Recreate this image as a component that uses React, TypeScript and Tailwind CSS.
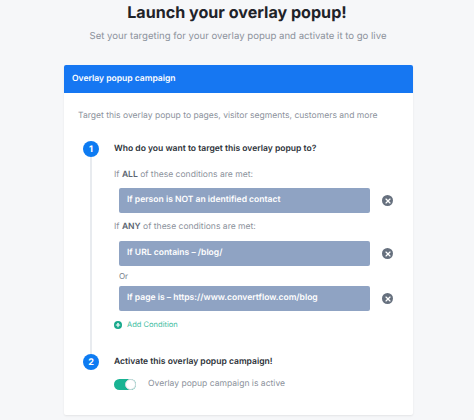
import { Plus, X } from "lucide-react";

const anyConditions = ["If URL contains – /blog/", "If page is – https://www.convertflow.com/blog"];

function StepBadge({ n }: { n: number }) {
  return (
    <span className="flex h-4 w-4 shrink-0 items-center justify-center rounded-full bg-[#0d7bf2] text-[9px] font-bold leading-none text-white">
      {n}
    </span>
  );
}

function ConditionRow({ label }: { label: string }) {
  return (
    <div className="flex items-center">
      <div className="flex h-[25px] w-[251px] items-center rounded-[2px] bg-[#8fa3c3] pl-2 text-[8.55px] font-semibold text-white">
        {label}
      </div>
      <span className="ml-[12px] flex h-[11px] w-[11px] items-center justify-center rounded-full bg-[#66707e]">
        <X size={8} strokeWidth={3.5} className="text-white" />
      </span>
    </div>
  );
}

export default function App() {
  return (
    <div className="h-[420px] w-[474px] overflow-hidden bg-[#f6f7f9] font-['Inter',sans-serif] [text-rendering:geometricPrecision]">
      <div className="flex flex-col items-center">
        <h1 className="text-[16.1px] font-bold leading-[25px] text-[#1f2329]">Launch your overlay popup!</h1>
        <p className="ml-[2px] mt-[6px] text-[9.6px] leading-[12px] text-[#8c929c]">
          Set your targeting for your overlay popup and activate it to go live
        </p>
      </div>

      <section className="ml-[64px] mt-[22px] h-[350px] w-[349px] rounded-[2px] bg-white shadow-[0_1px_2px_rgba(0,0,0,0.08)]">
        <div className="flex h-[28px] items-center rounded-t-[2px] bg-[#1677f2] pl-2 text-[8.55px] font-semibold text-white">
          Overlay popup campaign
        </div>

        <div className="pl-[14px] pt-[17px]">
          <p className="text-[8.55px] leading-[12px] text-[#8c929c]">
            Target this overlay popup to pages, visitor segments, customers and more
          </p>

          <div className="mt-[19px] flex">
            <div className="flex w-[36px] flex-col items-start pl-[5px]">
              <div className="flex h-full w-4 flex-col items-center">
                <StepBadge n={1} />
                <div className="w-[2px] flex-1 bg-[#e8ebef]" />
              </div>
            </div>
            <div className="pb-[25px]">
              <h2 className="text-[8.55px] font-semibold leading-[16px] text-[#2c3138]">
                Who do you want to target this overlay popup to?
              </h2>
              <p className="mt-[12px] text-[8.55px] leading-[12px] text-[#8c929c]">
                If <b className="font-semibold text-[#5d6672]">ALL</b> of these conditions are met:
              </p>
              <div className="ml-[5px] mt-[7px]">
                <ConditionRow label="If person is NOT an identified contact" />
              </div>
              <p className="mt-[8px] text-[8.55px] leading-[12px] text-[#8c929c]">
                If <b className="font-semibold text-[#5d6672]">ANY</b> of these conditions are met:
              </p>
              <div className="ml-[5px] mt-[8px]">
                <ConditionRow label={anyConditions[0]} />
                <p className="mt-[5px] text-[8px] leading-[10px] text-[#737b87]">Or</p>
                <div className="mt-[5px]">
                  <ConditionRow label={anyConditions[1]} />
                </div>
              </div>
              <div className="mt-[9px] flex items-center gap-[5px]">
                <span className="flex h-2 w-2 items-center justify-center rounded-full bg-[#16a88b]">
                  <Plus size={6} strokeWidth={4.5} className="text-white" />
                </span>
                <span className="text-[7.56px] leading-[10px] text-[#3ebd9f]">Add Condition</span>
              </div>
            </div>
          </div>

          <div className="mt-[-1px] flex items-center">
            <div className="w-[36px] pl-[5px]">
              <StepBadge n={2} />
            </div>
            <h2 className="text-[8.55px] font-semibold leading-[16px] text-[#2c3138]">
              Activate this overlay popup campaign!
            </h2>
          </div>
          <div className="ml-[36px] mt-[8px] flex items-center">
            <span className="flex h-[11px] w-[22px] items-center justify-end rounded-full bg-[#19b393]">
              <span className="h-[11px] w-[11px] rounded-full border border-[#d5dadf] bg-white" />
            </span>
            <span className="ml-[12px] text-[8.55px] leading-[12px] text-[#8c929c]">Overlay popup campaign is active</span>
          </div>
        </div>
      </section>
    </div>
  );
}
